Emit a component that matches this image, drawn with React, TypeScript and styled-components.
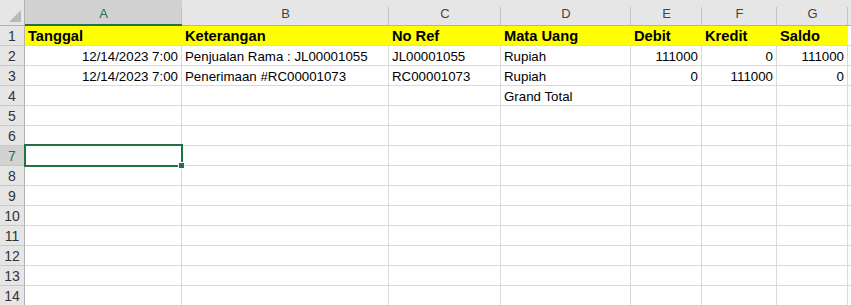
import React from "react";
import styled, { createGlobalStyle, css } from "styled-components";

const GREEN = "#217346";
const GRID = "#d9d9d9";
const HEAD_BG = "#e6e6e6";
const HEAD_SEL = "#d2d2d2";
const HEAD_LINE = "#b1b1b1";

const GlobalStyle = createGlobalStyle`
  html, body {
    margin: 0;
    padding: 0;
    background: #fff;
    overflow: hidden;
  }
  body {
    font-family: "Liberation Sans", Arial, sans-serif;
  }
`;

type Align = "left" | "right";

interface CellData {
  v?: string;
  align?: Align;
}

const columns = [
  { key: "A", width: 157 },
  { key: "B", width: 207 },
  { key: "C", width: 112 },
  { key: "D", width: 130 },
  { key: "E", width: 71 },
  { key: "F", width: 75 },
  { key: "G", width: 71 },
];

const header = ["Tanggal", "Keterangan", "No Ref", "Mata Uang", "Debit", "Kredit", "Saldo"];

const data: CellData[][] = [
  [
    { v: "12/14/2023 7:00", align: "right" },
    { v: "Penjualan Rama : JL00001055" },
    { v: "JL00001055" },
    { v: "Rupiah" },
    { v: "111000", align: "right" },
    { v: "0", align: "right" },
    { v: "111000", align: "right" },
  ],
  [
    { v: "12/14/2023 7:00", align: "right" },
    { v: "Penerimaan #RC00001073" },
    { v: "RC00001073" },
    { v: "Rupiah" },
    { v: "0", align: "right" },
    { v: "111000", align: "right" },
    { v: "0", align: "right" },
  ],
  [{}, {}, {}, { v: "Grand Total" }, {}, {}, {}],
];

const TOTAL_ROWS = 14;
const SELECTED_ROW = 7;
const SELECTED_COL = "A";

const Sheet = styled.div`
  display: grid;
  grid-template-columns: 25px ${columns.map((c) => `${c.width}px`).join(" ")} 1fr;
  grid-template-rows: 26px repeat(${TOTAL_ROWS}, 20px);
  width: 851px;
  height: 305px;
  overflow: hidden;
  font-size: 13.3px;
  color: #000;
`;

const Corner = styled.div`
  position: relative;
  background: ${HEAD_BG};
  border-right: 1px solid ${HEAD_LINE};
  border-bottom: 1px solid ${HEAD_LINE};

  &::after {
    content: "";
    position: absolute;
    right: 3px;
    bottom: 3px;
    width: 0;
    height: 0;
    border-left: 12px solid transparent;
    border-bottom: 12px solid #b9b9b9;
  }
`;

const ColHead = styled.div<{ $sel?: boolean }>`
  position: relative;
  display: flex;
  align-items: center;
  justify-content: center;
  padding-top: 2px;
  background: ${(p) => (p.$sel ? HEAD_SEL : HEAD_BG)};
  color: ${(p) => (p.$sel ? GREEN : "#444")};
  font-size: 13px;
  border-bottom: ${(p) => (p.$sel ? `2px solid ${GREEN}` : `1px solid ${HEAD_LINE}`)};

  &::after {
    content: "";
    position: absolute;
    right: 0;
    top: 7px;
    bottom: 0;
    width: 1px;
    background: #c4c4c4;
  }
`;

const RowHead = styled.div<{ $sel?: boolean }>`
  display: flex;
  align-items: center;
  justify-content: center;
  padding-top: 1px;
  background: ${(p) => (p.$sel ? HEAD_SEL : HEAD_BG)};
  color: ${(p) => (p.$sel ? GREEN : "#333")};
  font-size: 14px;
  border-right: 1px solid ${HEAD_LINE};
  border-bottom: 1px solid #c8c8c8;
`;

const Cell = styled.div<{ $fill?: boolean; $bold?: boolean; $align?: Align }>`
  position: relative;
  display: flex;
  align-items: center;
  padding: 1px 3px 0 3px;
  white-space: nowrap;
  overflow: visible;
  border-right: 1px solid ${GRID};
  border-bottom: 1px solid ${GRID};
  justify-content: ${(p) => (p.$align === "right" ? "flex-end" : "flex-start")};

  ${(p) =>
    p.$fill &&
    css`
      background: #ffff00;
      border-right-color: #ffff00;
    `}

  ${(p) =>
    p.$bold &&
    css`
      font-weight: 700;
      font-size: 14.67px;
    `}
`;

const Selection = styled.div`
  position: absolute;
  left: -1px;
  top: -2px;
  right: -2px;
  bottom: -2px;
  border: 2px solid ${GREEN};
  pointer-events: none;
  z-index: 2;
`;

const FillHandle = styled.div`
  position: absolute;
  right: -4px;
  bottom: -4px;
  width: 5px;
  height: 5px;
  background: ${GREEN};
  border: 1px solid #fff;
  z-index: 3;
`;

const Filler = styled(Cell)`
  border-right: none;
`;

export default function App() {
  const rows: React.ReactNode[] = [];

  for (let r = 1; r <= TOTAL_ROWS; r++) {
    const sel = r === SELECTED_ROW;
    rows.push(
      <RowHead key={`h${r}`} $sel={sel}>
        {r}
      </RowHead>
    );
    columns.forEach((c, i) => {
      if (r === 1) {
        rows.push(
          <Cell key={`${c.key}${r}`} $fill $bold>
            {header[i]}
          </Cell>
        );
        return;
      }
      const cell = data[r - 2]?.[i] ?? {};
      const isSel = sel && c.key === SELECTED_COL;
      rows.push(
        <Cell key={`${c.key}${r}`} $align={cell.align}>
          {cell.v}
          {isSel && (
            <Selection>
              <FillHandle />
            </Selection>
          )}
        </Cell>
      );
    });
    rows.push(<Filler key={`x${r}`} />);
  }

  return (
    <>
      <GlobalStyle />
      <Sheet>
        <Corner />
        {columns.map((c) => (
          <ColHead key={c.key} $sel={c.key === SELECTED_COL}>
            {c.key}
          </ColHead>
        ))}
        <ColHead />
        {rows}
      </Sheet>
    </>
  );
}
